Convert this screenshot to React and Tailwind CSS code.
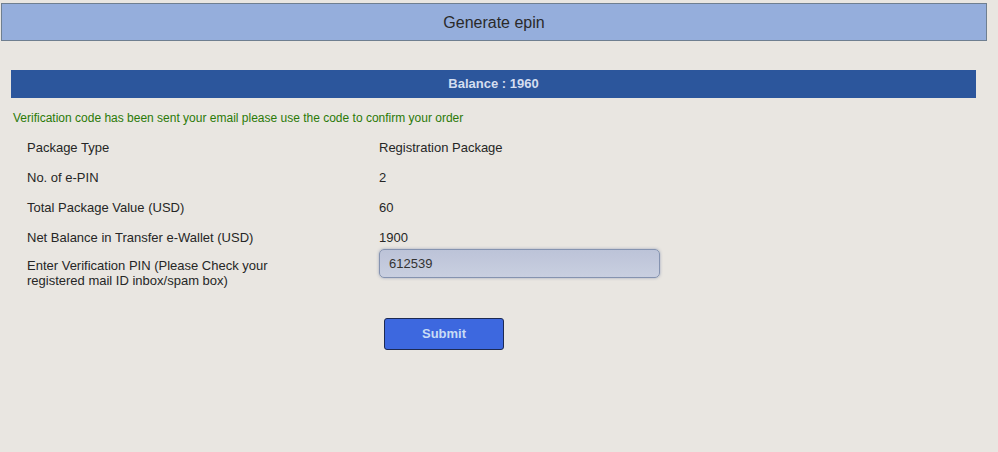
import React from "react";

const rows = [
  { label: "Package Type", value: "Registration Package" },
  { label: "No. of e-PIN", value: "2" },
  { label: "Total Package Value (USD)", value: "60" },
  { label: "Net Balance in Transfer e-Wallet (USD)", value: "1900" },
];

export default function App() {
  return (
    <div className="w-[998px] h-[452px] bg-[#e9e6e1] overflow-hidden" style={{ fontFamily: '"Liberation Sans", Arial, sans-serif' }}>
      {/* page title */}
      <div className="pt-[3px] pl-[1px]">
        <div className="w-[986px] h-[38px] bg-[#95aedc] border border-[#6f7f90] flex items-center justify-center pt-[2px] text-[16px] text-[#2a2a2a]">
          Generate epin
        </div>
      </div>

      <div className="mt-[29px] ml-[11px] w-[965px] h-[28px] bg-[#2c569c] flex items-center justify-center text-[13px] font-bold text-[#d4def0]">
        Balance : 1960
      </div>

      <div className="mt-[13px] ml-[13px] text-[12px] leading-[14px] text-[#2b7a08]">
        Verification code has been sent your email please use the code to confirm your order
      </div>

      <div className="mt-[8px] ml-[27px]">
        {rows.map((r) => (
          <div key={r.label} className="flex h-[30px] items-center text-[13px] text-[#262626]">
            <div className="w-[352px]">{r.label}</div>
            <div>{r.value}</div>
          </div>
        ))}
        <div className="flex mt-[-4px] text-[13px] text-[#262626]">
          <div className="w-[352px] leading-[15px] pt-[9px]">
            Enter Verification PIN (Please Check your
            <br />
            registered mail ID inbox/spam box)
          </div>
          <input
            defaultValue="612539"
            className="w-[281px] h-[29px] rounded-[5px] border border-[#8593b0] bg-gradient-to-b from-[#bcc3d8] to-[#c9cfe0] px-[9px] text-[13px] text-[#333] shadow-[0_0_3px_rgba(80,100,150,0.5)] outline-none"
            style={{ fontFamily: '"Liberation Sans", Arial, sans-serif' }}
          />
        </div>
      </div>

      <div className="mt-[30px] ml-[384px]">
        <button
          className="w-[120px] h-[32px] rounded-[3px] border border-[#1d2a52] bg-[#3d68df] text-[13px] font-bold text-[#c8dcf5]"
          style={{ fontFamily: '"Liberation Sans", Arial, sans-serif' }}
        >
          Submit
        </button>
      </div>
    </div>
  );
}
